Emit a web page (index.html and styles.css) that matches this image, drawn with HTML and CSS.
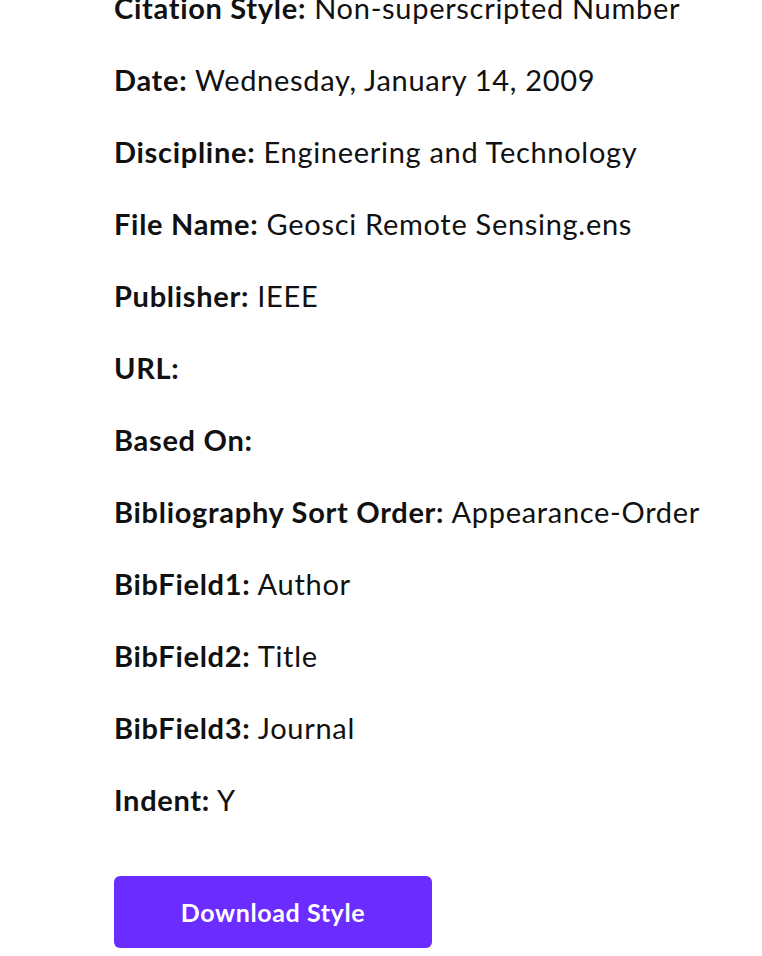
FILE: index.html
```html
<!DOCTYPE html>
<html>
<head>
<meta charset="utf-8">
<link rel="stylesheet" href="styles.css">
</head>
<body>
<main class="details">
  <p class="row"><b>Citation Style:</b> Non-superscripted Number</p>
  <p class="row"><b>Date:</b> Wednesday, January 14, 2009</p>
  <p class="row"><b>Discipline:</b> Engineering and Technology</p>
  <p class="row"><b>File Name:</b> Geosci Remote Sensing.ens</p>
  <p class="row"><b>Publisher:</b> IEEE</p>
  <p class="row"><b>URL:</b></p>
  <p class="row"><b>Based On:</b></p>
  <p class="row"><b>Bibliography Sort Order:</b> Appearance-Order</p>
  <p class="row"><b>BibField1:</b> Author</p>
  <p class="row"><b>BibField2:</b> Title</p>
  <p class="row"><b>BibField3:</b> Journal</p>
  <p class="row"><b>Indent:</b> Y</p>
  <a class="download" href="#">Download Style</a>
</main>
</body>
</html>
```
FILE: styles.css
```css
html, body {
  margin: 0;
  padding: 0;
  background: #fff;
}
body {
  font-family: Lato, "Open Sans", sans-serif;
  color: #111;
  overflow: hidden;
}
.details {
  padding-left: 114px;
  margin-top: -10px;
  display: flex;
  flex-direction: column;
  align-items: flex-start;
}
.row {
  margin: 0 0 36px;
  font-size: 29px;
  line-height: 36px;
  letter-spacing: 0.7px;
  white-space: nowrap;
}
.row b {
  font-weight: 700;
}
.download {
  margin-top: 22px;
  display: flex;
  align-items: center;
  justify-content: center;
  width: 318px;
  height: 72px;
  border-radius: 6px;
  background: #6b2cff;
  color: #fff;
  font-size: 25px;
  letter-spacing: 0.6px;
  font-weight: 700;
  text-decoration: none;
}
```
